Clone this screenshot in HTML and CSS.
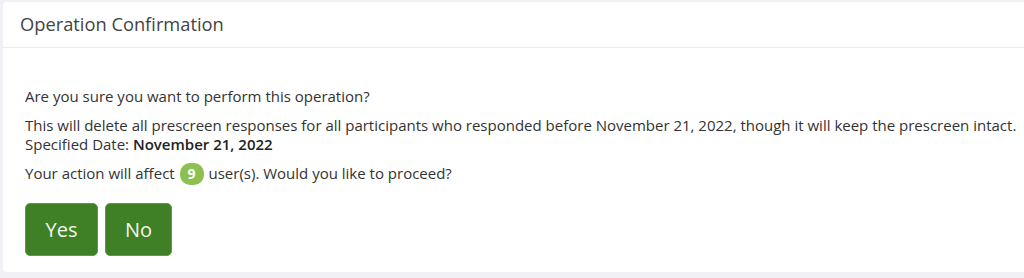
FILE: index.html
```html
<!DOCTYPE html>
<html lang="en">
<head>
  <meta charset="UTF-8">
  <title>Operation Confirmation</title>
  <link rel="stylesheet" href="styles.css">
</head>
<body>
  <div class="panel">
    <div class="panel-heading">Operation Confirmation</div>
    <div class="panel-body">
      <p>Are you sure you want to perform this operation?</p>
      <p>This will delete all prescreen responses for all participants who responded before November 21, 2022, though it will keep the prescreen intact.<br>
        Specified Date: <strong>November 21, 2022</strong></p>
      <p>Your action will affect <span class="badge">9</span> user(s). Would you like to proceed?</p>
      <div class="actions">
        <button class="btn">Yes</button>
        <button class="btn">No</button>
      </div>
    </div>
  </div>
</body>
</html>
```

FILE: styles.css
```css
body {
  margin: 0;
  padding: 2px 0 6px 3px;
  background-color: #f0f0f5;
  font-family: 'Open Sans', sans-serif;
  color: #333;
}

.panel {
  background-color: #fff;
  border-radius: 4px 0 0 4px;
  height: 270px;
}

.panel-heading {
  padding: 10px 17px 11px;
  font-size: 18.3px;
  line-height: 24px;
  color: #444;
  border-bottom: 1px solid #ececf0;
}

.panel-body {
  padding: 39px 0 0 22px;
  font-size: 15px;
  line-height: 19px;
}

.panel-body p {
  margin: 0 0 10px;
}

.panel-body strong {
  font-weight: 600;
  color: #222;
}

.badge {
  padding: 1px 8px 2px;
  margin: 0 1px;
  border-radius: 10px;
  background-color: #8cc152;
  color: #fff;
  font-weight: 700;
  font-size: 14px;
}

.actions {
  display: flex;
  gap: 7px;
  margin-top: 20px;
}

.btn {
  height: 53px;
  padding: 0 10px;
  font-family: 'Open Sans', sans-serif;
  font-size: 20px;
  color: #f2f7ee;
  background-color: #3f7f26;
  border: 1px solid #5f9a45;
  border-radius: 5px;
  cursor: pointer;
}

.btn:first-child {
  width: 73px;
}

.btn:last-child {
  width: 67px;
}
```
